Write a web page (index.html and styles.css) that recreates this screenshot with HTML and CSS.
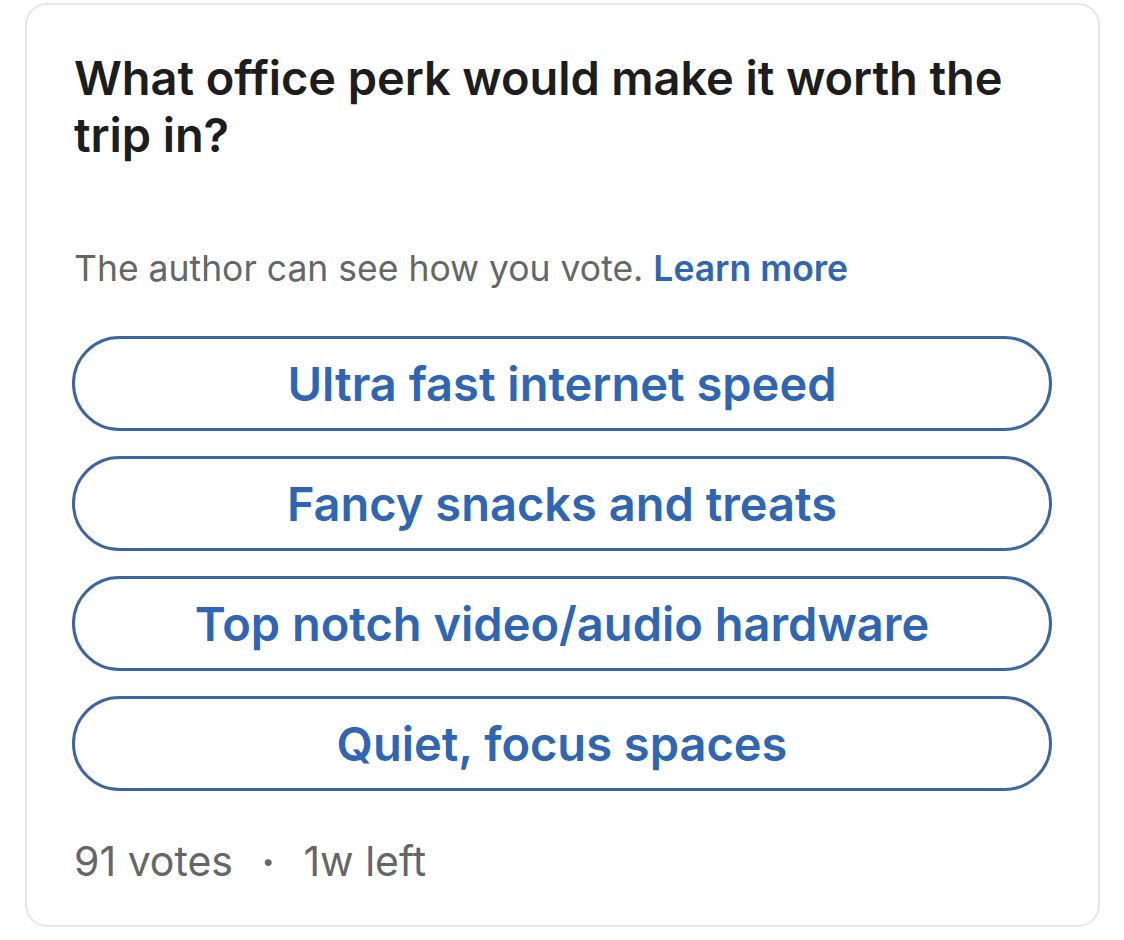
FILE: index.html
```html
<!DOCTYPE html>
<html lang="en">
<head>
  <meta charset="UTF-8">
  <meta name="viewport" content="width=device-width, initial-scale=1.0">
  <title>Office perk poll</title>
  <link rel="stylesheet" href="styles.css">
</head>
<body>
  <div class="poll">
    <h1 class="question">What office perk would make it worth the trip in?</h1>
    <p class="notice">The author can see how you vote. <a class="learn-more" href="#">Learn more</a></p>
    <div class="options">
      <button class="option" type="button">Ultra fast internet speed</button>
      <button class="option" type="button">Fancy snacks and treats</button>
      <button class="option" type="button">Top notch video/audio hardware</button>
      <button class="option" type="button">Quiet, focus spaces</button>
    </div>
    <div class="meta">
      <span>91 votes</span>
      <span class="dot">&bull;</span>
      <span>1w left</span>
    </div>
  </div>
</body>
</html>
```

FILE: styles.css
```css
body { margin: 0; padding: 0; background: #fff; font-family: Inter, "Noto Sans", Arial, sans-serif; }
.poll { width: 1075px; height: 924px; box-sizing: border-box; margin: 3px 0 0 25px; border: 2px solid #e6e6e6; border-radius: 22px; padding: 44px 46px 0 45px; }
.question { margin: 0 0 0 2px; font-size: 47px; line-height: 57px; font-weight: 600; color: #1d1d1d; letter-spacing: -0.1px; }
.notice { margin: 84px 0 0 2px; font-size: 35.5px; line-height: 43px; color: #666; }
.learn-more { color: #2e66b5; font-weight: 600; text-decoration: none; }
.options { display: flex; flex-direction: column; gap: 25px; margin-top: 46px; }
.option { height: 95px; border: 3px solid #3c65a3; border-radius: 48px; background: #fff; color: #2e66b5; font-family: inherit; font-size: 47px; font-weight: 600; cursor: pointer; }
.meta { display: flex; align-items: center; gap: 29px; margin: 45px 0 0 2px; font-size: 41px; line-height: 50px; color: #666; }
.meta .dot { font-size: 22px; }
```
